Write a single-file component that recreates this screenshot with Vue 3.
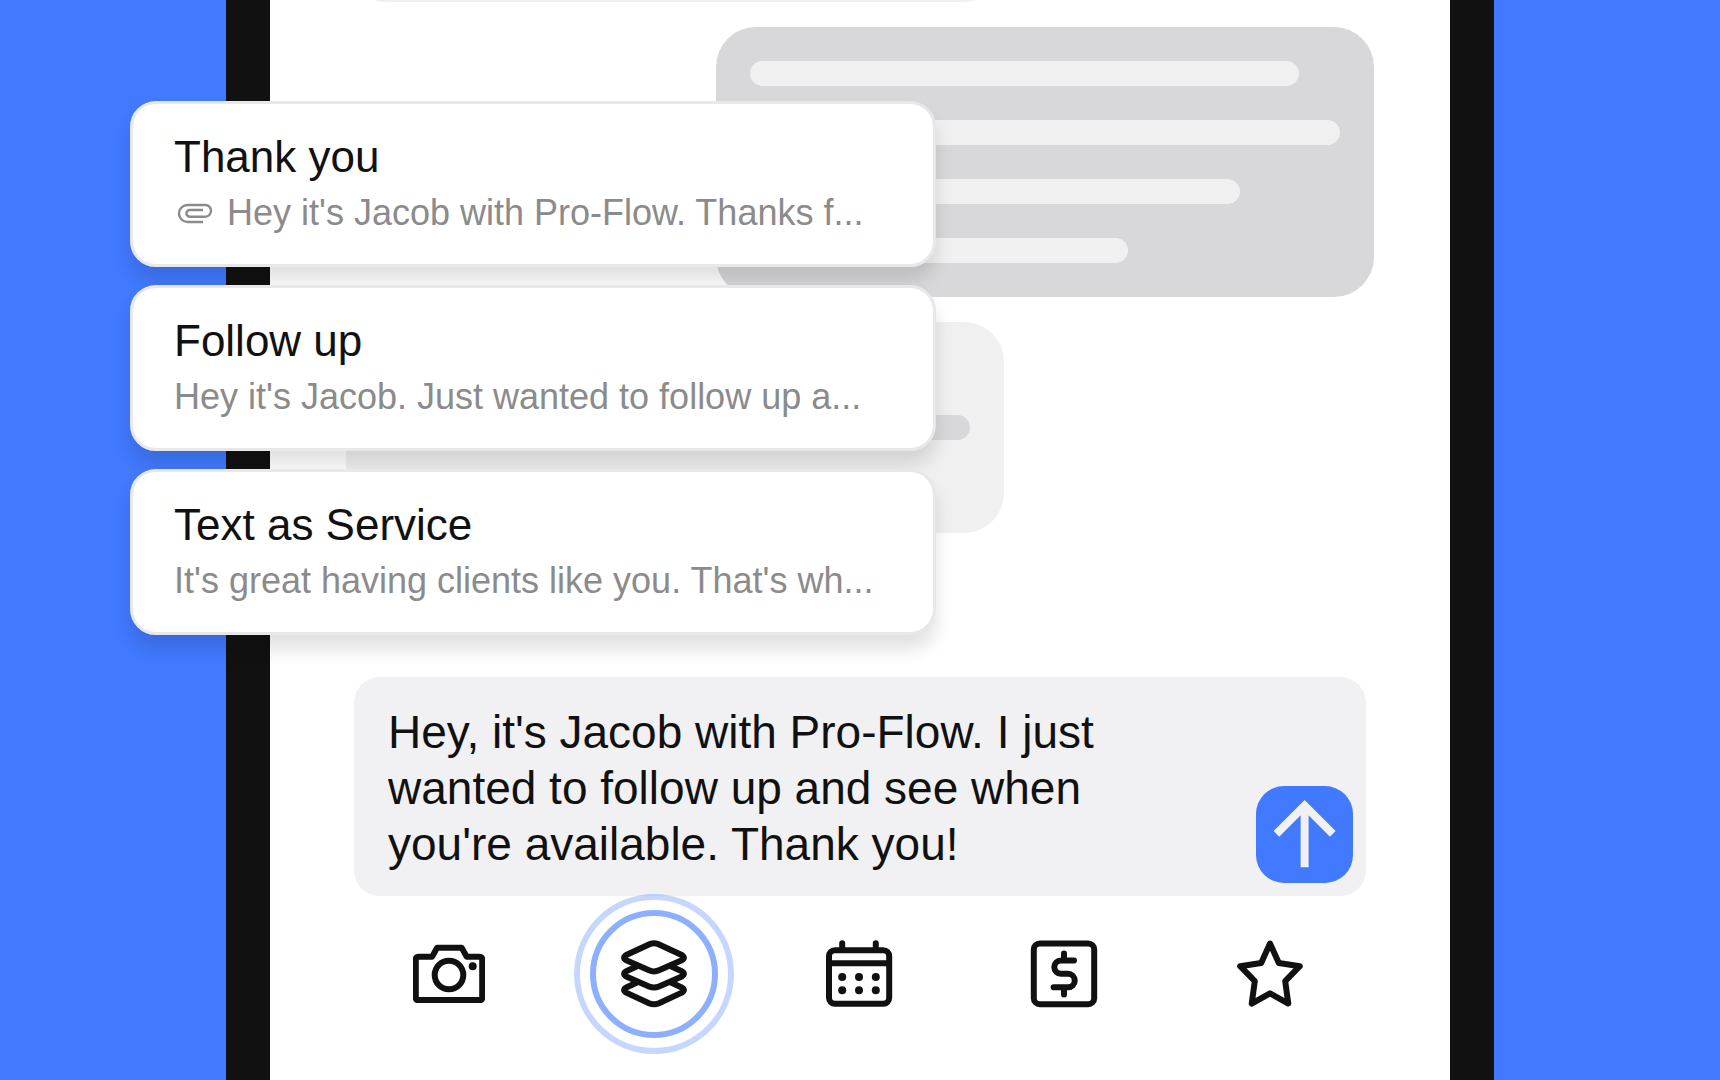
<template>
  <div class="page">
    <div class="phone">
      <div class="thread">
        <div
          class="bubble"
          :class="message.from"
          v-for="(message, index) in messages"
          :key="index"
        >
          <div
            class="line"
            v-for="(width, i) in message.lines"
            :key="i"
            :style="{ width: width + '%' }"
          ></div>
        </div>
      </div>

      <form class="composer" @submit.prevent="send">
        <textarea
          v-model="text"
          rows="3"
          aria-label="Message"
          spellcheck="false"
        ></textarea>
        <button type="submit" class="send" aria-label="Send">
          <svg viewBox="0 0 97 97">
            <path d="M20.4 47.9L48.6 19.7L76.8 47.9M48.6 20V81.3" />
          </svg>
        </button>
      </form>

      <nav class="tools">
        <button type="button" class="tool" aria-label="Camera">
          <svg viewBox="0 0 72 72">
            <path
              d="M6 18.7H19.2L24 9.8H48.8L53.6 18.7H66Q69.2 18.7 69.2 21.5V59.5Q69.2 62 66.7 62H5.3Q2.8 62 2.8 59.5V21.5Q2.8 18.7 6 18.7Z"
            />
            <circle cx="36" cy="37" r="14.3" />
            <circle cx="59.7" cy="28.3" r="4" class="dot" />
          </svg>
        </button>
        <button type="button" class="tool active" aria-label="Templates">
          <svg viewBox="0 0 72 72">
            <path
              d="M32 6Q36 4.4 40 6L63.8 17Q68 19.7 63.8 22.2L41 32.3Q36 34.5 31 32.3L8.2 22.2Q4 19.7 8.2 17Z"
            />
            <path
              d="M18.6 28.6L8.2 33.3Q4 35.8 8.2 38.4L31 48.5Q36 50.7 41 48.5L63.8 38.4Q68 35.8 63.8 33.3L53.4 28.6"
            />
            <path
              d="M18.6 44.8L8.2 49.5Q4 52 8.2 54.6L31 65.3Q36 67.4 41 65.3L63.8 54.6Q68 52 63.8 49.5L53.4 44.8"
            />
          </svg>
        </button>
        <button type="button" class="tool" aria-label="Calendar">
          <svg viewBox="0 0 72 72">
            <rect x="6" y="12.2" width="60.2" height="53.6" rx="6" />
            <path d="M6 25.3H66M19.2 5.3V12M52.8 5.3V12" />
            <circle
              v-for="(dot, i) in dots"
              :key="i"
              :cx="dot[0]"
              :cy="dot[1]"
              r="4"
              class="dot"
            />
          </svg>
        </button>
        <button type="button" class="tool" aria-label="Payment">
          <svg viewBox="0 0 72 72">
            <rect x="5.8" y="5.4" width="60.4" height="60.8" rx="6" />
            <path
              d="M46 22.4H33A6.7 6.7 0 0 0 33 35.8H40A6.7 6.7 0 0 1 40 49.3H25.6M36 15.6V22M36 49.5V56.4"
            />
          </svg>
        </button>
        <button type="button" class="tool" aria-label="Favorites">
          <svg viewBox="0 0 72 72">
            <path
              d="M37 5.5L45.8 25L66.8 28.2L52.2 43.2L55.3 65.6L37 55.3L18.7 65.6L21.8 43.2L7.2 28.2L28.2 25Z"
            />
          </svg>
        </button>
      </nav>

      <div class="templates">
        <button
          type="button"
          class="template"
          v-for="template in templates"
          :key="template.title"
          @click="text = template.body"
        >
          <span class="title">{{ template.title }}</span>
          <span class="preview">
            <svg class="clip" v-if="template.file" viewBox="0 0 34 19">
              <path
                d="M25 18H9.5A8.5 8.5 0 0 1 9.5 1H27.2A5.85 5.85 0 0 1 27.2 12.7H11.7A3.35 3.35 0 0 1 11.7 6H25"
              />
            </svg>
            {{ template.body }}
          </span>
        </button>
      </div>
    </div>
  </div>
</template>
<script setup>
import { ref } from "vue";

const text = ref(
  "Hey, it's Jacob with Pro-Flow. I just wanted to follow up and see when you're available. Thank you!"
);

// placeholder messages, line widths in percent of the bubble
const messages = [
  { from: "received", lines: [93, 100, 60] },
  { from: "sent", lines: [93, 100, 83, 64] },
  { from: "received", lines: [86, 100, 60] },
];

const templates = [
  {
    title: "Thank you",
    body: "Hey it's Jacob with Pro-Flow. Thanks f...",
    file: true,
  },
  {
    title: "Follow up",
    body: "Hey it's Jacob. Just wanted to follow up a...",
  },
  {
    title: "Text as Service",
    body: "It's great having clients like you. That's wh...",
  },
];

const dots = [
  [19.2, 39],
  [36, 39],
  [52.8, 39],
  [19.2, 52.3],
  [36, 52.3],
  [52.8, 52.3],
];

const send = () => {
  text.value = "";
};
</script>
<style>
body {
  margin: 0;
  background: #4179ff;
}
</style>
<style scoped>
.page {
  box-sizing: border-box;
  height: 100vh;
  padding: 0 226px;
  overflow: hidden;
  background: #4179ff;
  font-family: "Liberation Sans", Arial, sans-serif;
  color: #111;
}
button,
textarea {
  padding: 0;
  border: none;
  background: none;
  font-family: inherit;
  color: inherit;
}
button {
  cursor: pointer;
}
svg {
  display: block;
  fill: none;
  stroke: currentColor;
}
.phone {
  position: relative;
  box-sizing: border-box;
  display: flex;
  flex-direction: column;
  height: 100%;
  border: solid #111;
  border-width: 0 44px;
  background: #fff;
}
.thread {
  flex: 1;
  min-height: 0;
  display: flex;
  flex-direction: column;
  justify-content: flex-end;
  gap: 25px;
  padding: 0 76px 144px;
}
.bubble {
  box-sizing: border-box;
  flex-shrink: 0;
  display: flex;
  flex-direction: column;
  gap: 34px;
  width: 64%;
  padding: 34px;
  border-radius: 40px;
  background: #f0f0f0;
}
.line {
  height: 25px;
  border-radius: 13px;
  background: #d8d8da;
}
.sent {
  align-self: flex-end;
  background: #d8d8da;
}
.sent .line {
  background: #f0f0f0;
}
.composer {
  display: flex;
  align-items: flex-end;
  margin: 0 84px;
  padding: 27px 13px 13px 34px;
  border-radius: 26px;
  background: #f1f1f4;
}
.composer textarea {
  flex: 1;
  min-width: 0;
  height: 168px;
  margin-bottom: 11px;
  padding-right: 120px;
  font-size: 46px;
  line-height: 56px;
  resize: none;
  outline: none;
  overflow: hidden;
}
.send {
  width: 97px;
  height: 97px;
  border-radius: 28px;
  background: #4179ff;
  color: #f1f1f4;
}
.send svg {
  stroke-width: 8;
}
.tools {
  display: grid;
  grid-template-columns: repeat(5, 1fr);
  justify-items: center;
  align-items: center;
  height: 156px;
  padding: 0 78px 28px 76px;
}
.tool {
  position: relative;
}
.tool svg {
  width: 72px;
  height: 72px;
  stroke-width: 6;
  stroke-linecap: round;
  stroke-linejoin: round;
}
.tool .dot {
  fill: currentColor;
  stroke: none;
}
.active::before,
.active::after {
  content: "";
  position: absolute;
  border: 6px solid #4179ff;
  border-radius: 50%;
}
.active::before {
  inset: -28px;
  opacity: 0.6;
}
.active::after {
  inset: -44px;
  opacity: 0.3;
}
.templates {
  position: absolute;
  left: -140px;
  right: 514px;
  bottom: 445px;
  display: flex;
  flex-direction: column;
  gap: 18px;
}
.template {
  display: flex;
  flex-direction: column;
  gap: 4px;
  padding: 25px 40px 27px 41px;
  border: 3px solid #e8e8ea;
  border-radius: 26px;
  background: #fff;
  box-shadow: 0 14px 18px rgba(0, 0, 0, 0.12);
  text-align: left;
  white-space: nowrap;
}
.title {
  font-size: 44px;
  line-height: 56px;
}
.preview {
  display: flex;
  align-items: center;
  gap: 15px;
  font-size: 36px;
  line-height: 48px;
  color: #8b8b8b;
}
.clip {
  width: 34px;
  height: 19px;
  margin-left: 4px;
  stroke-width: 2.4;
  overflow: visible;
}
</style>
